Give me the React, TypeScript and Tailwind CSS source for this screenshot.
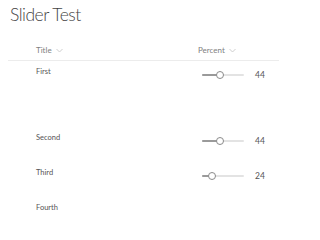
import { useState } from "react";

type Item = { title: string; percent: number | null; height: string };

const items: Item[] = [
  { title: "First", percent: 44, height: "h-[66px]" },
  { title: "Second", percent: 44, height: "h-[35px]" },
  { title: "Third", percent: 24, height: "h-[35px]" },
  { title: "Fourth", percent: null, height: "h-[35px]" },
];

function Chevron() {
  return (
    <svg width="7" height="5" viewBox="0 0 7 5" className="ml-[4px] mt-[1px]">
      <path d="M0.5 1 L3.5 4 L6.5 1" fill="none" stroke="#c8c8c8" strokeWidth="0.9" />
    </svg>
  );
}

function Slider({ value }: { value: number }) {
  return (
    <div className="relative w-[42px] h-[8px]">
      <div className="absolute left-0 right-0 top-[3px] h-[2px] rounded-full bg-[#e3e3e3]" />
      <div
        className="absolute left-0 top-[3px] h-[2px] rounded-full bg-[#9a9a9a]"
        style={{ width: `${value}%` }}
      />
      <div
        className="absolute top-0 w-[8px] h-[8px] -ml-[4px] rounded-full border border-[#8a8a8a] bg-white"
        style={{ left: `${value}%` }}
      />
    </div>
  );
}

export default function App() {
  const [rows] = useState(items);

  return (
    <div className="w-[279px] h-[223px] overflow-hidden bg-white text-[#555] font-['Lato',sans-serif]">
      <div className="h-[40px] pl-[10px] pt-[2px] text-[17.5px] leading-[26px] font-light tracking-[-0.5px] text-[#444]">
        Slider Test
      </div>

      {/* Column headers */}
      <div className="ml-[8px] h-[21px] flex items-center border-b border-[#ececec] text-[8px] text-[#808080]">
        <div className="w-[190px] pl-[28px] flex items-center">
          Title
          <Chevron />
        </div>
        <div className="flex items-center">
          Percent
          <Chevron />
        </div>
      </div>

      {rows.map(r => (
        <div key={r.title} className={`ml-[8px] flex ${r.height}`}>
          <div className="w-[190px] pl-[28px] pt-[5px] text-[7.5px] leading-[12px]">{r.title}</div>
          {r.percent !== null && (
            <div className="pl-[4px] pt-[10px] flex items-start">
              <Slider value={r.percent} />
              <span className="ml-[11px] -mt-[2px] text-[8.5px] leading-[12px] text-[#555]">{r.percent}</span>
            </div>
          )}
        </div>
      ))}
    </div>
  );
}
